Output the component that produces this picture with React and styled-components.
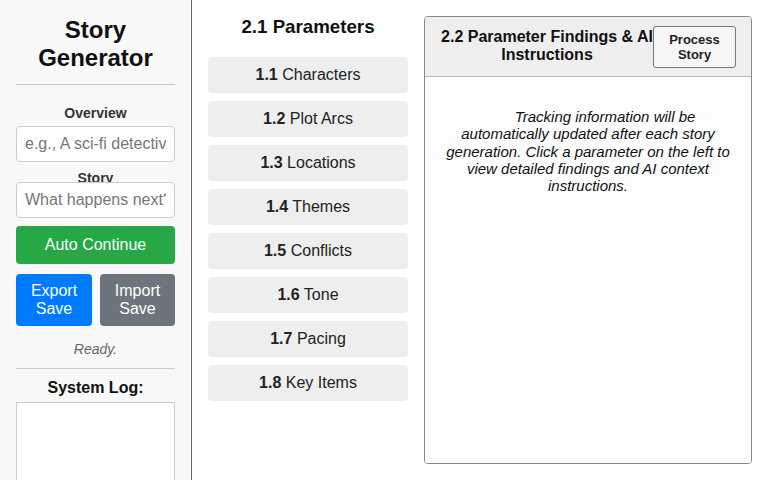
import React from "react";
import styled, { createGlobalStyle } from "styled-components";

const Global = createGlobalStyle`
  html, body { margin: 0; padding: 0; height: 100%; }
  body { font-family: "Liberation Sans", Arial, sans-serif; background: #fff; color: #111; }
  #root { height: 100%; }
  * { box-sizing: border-box; }
`;

const Page = styled.div`
  display: flex;
  height: 480px;
  overflow: hidden;
`;

const Sidebar = styled.aside`
  width: 192px;
  flex-shrink: 0;
  background: #f8f8f8;
  border-right: 1px solid #666;
  padding: 16px 16px 0 16px;
  display: flex;
  flex-direction: column;
  overflow: hidden;
  & > * { flex-shrink: 0; }
`;

const Title = styled.h1`
  margin: 0;
  font-size: 24px;
  font-weight: bold;
  text-align: center;
  color: #111;
`;

const Rule = styled.hr`
  border: none;
  border-top: 1px solid #ccc;
  margin: ${(p) => p.$m || "12px 0"};
  width: 100%;
`;

const FieldLabel = styled.label`
  display: block;
  font-size: 14px;
  font-weight: bold;
  color: #333;
  text-align: center;
  margin-top: ${(p) => p.$top || "0"};
  height: ${(p) => p.$h || "16px"};
  overflow: hidden;
  margin-bottom: ${(p) => p.$mb || "5px"};
  line-height: 16px;
`;

const TextInput = styled.input`
  display: block;
  width: 100%;
  height: 36px;
  padding: 0 8px;
  font-family: "Liberation Sans", Arial, sans-serif;
  font-size: 16px;
  border: 1px solid #ccc;
  border-radius: 4px;
  background: #fff;
  color: #222;
  &::placeholder { color: #777; }
`;

const ActionButton = styled.button`
  display: block;
  width: 100%;
  border: none;
  border-radius: 4px;
  font-family: "Liberation Sans", Arial, sans-serif;
  font-size: 16px;
  line-height: 18px;
  color: #fff;
  background: ${(p) => p.$bg};
  height: ${(p) => p.$h || "38px"};
  margin-top: ${(p) => p.$top || "0"};
  padding: 0 4px;
  cursor: pointer;
`;

const ButtonRow = styled.div`
  display: grid;
  grid-template-columns: 76px 75px;
  gap: 8px;
  margin-top: 10px;
`;

const Status = styled.p`
  margin: 15px 0 0 0;
  font-size: 14px;
  font-style: italic;
  color: #666;
  text-align: center;
  line-height: 16px;
`;

const LogTitle = styled.h3`
  margin: 0 0 5px 0;
  font-size: 16px;
  font-weight: bold;
  text-align: center;
  line-height: 18px;
  color: #111;
`;

const LogBox = styled.div`
  flex: 1 0 auto;
  min-height: 80px;
  background: #fff;
  border: 1px solid #ccc;
  border-bottom: none;
`;

const Middle = styled.section`
  width: 232px;
  flex-shrink: 0;
  padding: 16px 16px 0 16px;
`;

const SectionTitle = styled.h3`
  margin: 0 0 19px 0;
  font-size: 18.72px;
  font-weight: bold;
  text-align: center;
  line-height: 22px;
  color: #111;
`;

const ParamList = styled.div`
  display: flex;
  flex-direction: column;
  gap: 8px;
`;

const ParamButton = styled.button`
  width: 200px;
  height: 36px;
  border: none;
  border-radius: 4px;
  background: #eee;
  color: #222;
  font-family: "Liberation Sans", Arial, sans-serif;
  font-size: 16px;
  cursor: pointer;
  b { font-weight: bold; }
`;

const Right = styled.section`
  flex: 1;
  padding: 16px 16px 16px 0;
  display: flex;
`;

const Panel = styled.div`
  flex: 1;
  border: 1px solid #888;
  border-radius: 4px;
  background: #fff;
  display: flex;
  flex-direction: column;
  overflow: hidden;
`;

const PanelHeader = styled.div`
  display: flex;
  align-items: center;
  padding: 8px 15px 8px 16px;
  background: #eee;
  border-bottom: 1px solid #bbb;
  height: 60px;
`;

const PanelTitle = styled.h4`
  flex: 1;
  margin: 0 0 2px 0;
  font-size: 16px;
  font-weight: bold;
  line-height: 18px;
  text-align: center;
  color: #111;
  min-width: 0;
`;

const ProcessButton = styled.button`
  flex-shrink: 0;
  width: 83px;
  height: 42px;
  background: #f6f6f6;
  border: 1px solid #777;
  border-radius: 3px;
  font-family: "Liberation Sans", Arial, sans-serif;
  font-size: 13px;
  font-weight: bold;
  line-height: 15px;
  color: #222;
  padding: 0 6px;
  cursor: pointer;
`;

const PanelBody = styled.div`
  flex: 1;
  padding: 31px 20px;
  background: #fdfdfd;
`;

const Hint = styled.p`
  margin: 0;
  font-size: 15px;
  font-style: italic;
  line-height: 17.3px;
  text-align: center;
  text-indent: 34px;
  color: #111;
`;

const params = [
  ["1.1", "Characters"],
  ["1.2", "Plot Arcs"],
  ["1.3", "Locations"],
  ["1.4", "Themes"],
  ["1.5", "Conflicts"],
  ["1.6", "Tone"],
  ["1.7", "Pacing"],
  ["1.8", "Key Items"],
];

export default function App() {
  return (
    <>
      <Global />
      <Page>
        <Sidebar>
          <Title>Story Generator</Title>
          <Rule $m="12px 0 20px 0" />
          <FieldLabel>Overview</FieldLabel>
          <TextInput placeholder="e.g., A sci-fi detective story" />
          <FieldLabel $top="8px" $h="12px" $mb="0">Story</FieldLabel>
          <TextInput placeholder="What happens next?" />
          <ActionButton $bg="#28a745" $top="8px">Auto Continue</ActionButton>
          <ButtonRow>
            <ActionButton $bg="#007bff" $h="52px">Export Save</ActionButton>
            <ActionButton $bg="#6c757d" $h="52px">Import Save</ActionButton>
          </ButtonRow>
          <Status>Ready.</Status>
          <Rule $m="11px 0 10px 0" />
          <LogTitle>System Log:</LogTitle>
          <LogBox />
        </Sidebar>
        <Middle>
          <SectionTitle>2.1 Parameters</SectionTitle>
          <ParamList>
            {params.map(([n, label]) => (
              <ParamButton key={n}>
                <b>{n}</b> {label}
              </ParamButton>
            ))}
          </ParamList>
        </Middle>
        <Right>
          <Panel>
            <PanelHeader>
              <PanelTitle>2.2 Parameter Findings &amp; AI Instructions</PanelTitle>
              <ProcessButton>Process Story</ProcessButton>
            </PanelHeader>
            <PanelBody>
              <Hint>
                Tracking information will be automatically updated after each story
                generation. Click a parameter on the left to view detailed findings and
                AI context instructions.
              </Hint>
            </PanelBody>
          </Panel>
        </Right>
      </Page>
    </>
  );
}
